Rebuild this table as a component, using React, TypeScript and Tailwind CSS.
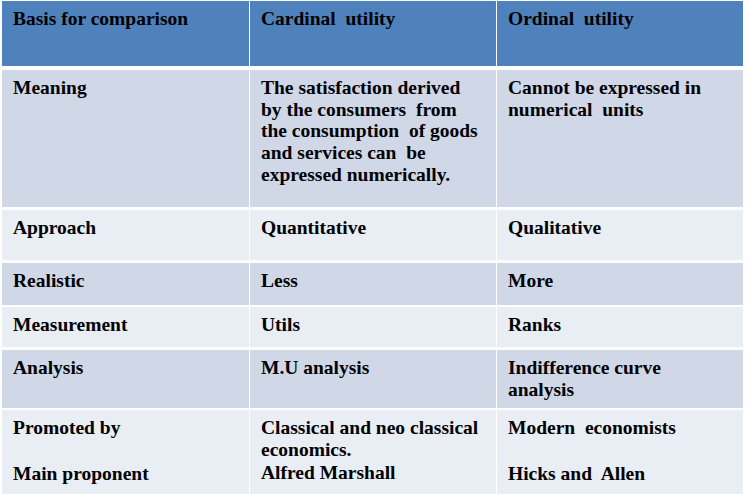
const serif = { fontFamily: '"Liberation Serif", serif' };

const rows: Array<{
	cells: string[][];
	height: string;
	gap: string;
	bg: string;
}> = [
	{
		cells: [
			["Meaning"],
			[
				"The satisfaction derived",
				"by the consumers  from",
				"the consumption  of goods",
				"and services can  be",
				"expressed numerically.",
			],
			["Cannot be expressed in", "numerical  units"],
		],
		height: "h-[137px]",
		gap: "mt-[4px]",
		bg: "bg-[#D0D8E8]",
	},
	{
		cells: [["Approach"], ["Quantitative"], ["Qualitative"]],
		height: "h-[50px]",
		gap: "mt-[3px]",
		bg: "bg-[#E9EDF4]",
	},
	{
		cells: [["Realistic"], ["Less"], ["More"]],
		height: "h-[42px]",
		gap: "mt-[3px]",
		bg: "bg-[#D0D8E8]",
	},
	{
		cells: [["Measurement"], ["Utils"], ["Ranks"]],
		height: "h-[40px]",
		gap: "mt-[2px]",
		bg: "bg-[#E9EDF4]",
	},
	{
		cells: [["Analysis"], ["M.U analysis"], ["Indifference curve", "analysis"]],
		height: "h-[58px]",
		gap: "mt-[3px]",
		bg: "bg-[#D0D8E8]",
	},
];

function Cell({ lines, bg, lead = "" }: { lines: string[]; bg: string; lead?: string }) {
	return (
		<div className={`${bg} pl-[11px] pt-[7px] ${lead}`}>
			{lines.map((l, i) => (
				<span key={i} className="block whitespace-pre" style={serif}>
					{l}
				</span>
			))}
		</div>
	);
}

export default function App() {
	return (
		<div
			className="w-[748px] h-[494px] overflow-hidden bg-white pl-[2px] pt-[1px] text-black font-bold text-[19.5px] leading-[21.7px] font-['Liberation_Serif']"
			style={serif}>
			<div className="grid grid-cols-[247px_246px_246px] gap-x-px h-[65px]">
				<Cell lines={["Basis for comparison"]} bg="bg-[#4F81BD]" />
				<Cell lines={["Cardinal  utility"]} bg="bg-[#4F81BD]" />
				<Cell lines={["Ordinal  utility"]} bg="bg-[#4F81BD]" />
			</div>

			{rows.map((row, i) => (
				<div
					key={i}
					className={`grid grid-cols-[247px_246px_246px] gap-x-px ${row.height} ${row.gap}`}>
					{row.cells.map((c, j) => (
						<Cell key={j} lines={c} bg={row.bg} />
					))}
				</div>
			))}

			<div className="grid grid-cols-[247px_246px_246px] gap-x-px h-[90px] mt-[2px]">
				<div className="bg-[#E9EDF4] pl-[11px] pt-[7px]">
					<span className="block" style={serif}>Promoted by</span>
					<span className="block mt-[24.6px]" style={serif}>Main proponent</span>
				</div>
				<Cell
					lines={["Classical and neo classical", "economics.", "Alfred Marshall"]}
					bg="bg-[#E9EDF4]"
					lead="leading-[22.4px]"
				/>
				<div className="bg-[#E9EDF4] pl-[11px] pt-[7px]">
					<span className="block whitespace-pre" style={serif}>Modern  economists</span>
					<span className="block whitespace-pre mt-[24.6px]" style={serif}>Hicks and  Allen</span>
				</div>
			</div>
		</div>
	);
}
